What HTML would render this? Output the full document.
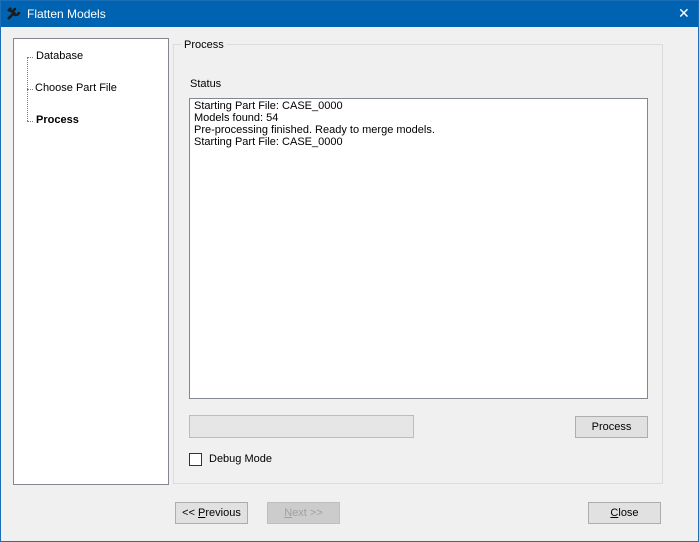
<!DOCTYPE html><html><head><style>
body{margin:0;width:699px;height:542px;overflow:hidden;font-family:"Liberation Sans",sans-serif;font-size:11px;}
.win{position:absolute;left:0;top:0;width:697px;height:540px;border:1px solid #1a6fb8;background:#f0f0f0;}
.title{position:absolute;left:0;top:0;width:697px;height:26px;background:#0063b1;color:#fff;}
.a{position:absolute;}
.btn{position:absolute;height:20px;border:1px solid #adadad;background:#e1e1e1;text-align:center;line-height:20px;color:#000;}
</style></head><body><div class="win">
<div class="title">
<svg class="a" style="left:5px;top:5px" width="16" height="16" viewBox="0 0 16 16"><path d="M2 13 L9 6 M3 3 L6 6 M5 2 L2 5 M10 3 A3 3 0 1 0 13 6" stroke="#1a1a1a" stroke-width="2.5" fill="none"/></svg>
<div class="a" style="left:26px;top:6px;font-size:12px">Flatten Models</div>
<div class="a" style="left:677px;top:4px;font-size:14px;font-weight:100">✕</div>
</div>
<div class="a" style="left:12px;top:37px;width:154px;height:445px;background:#fff;border:1px solid #828790"></div>
<div class="a" style="left:26px;top:56px;width:0;height:64px;border-left:1px dotted #777"></div>
<div class="a" style="left:26px;top:56px;width:6px;border-top:1px dotted #777"></div>
<div class="a" style="left:26px;top:88px;width:6px;border-top:1px dotted #777"></div>
<div class="a" style="left:26px;top:120px;width:6px;border-top:1px dotted #777"></div>
<div class="a" style="left:35px;top:49px">Database</div>
<div class="a" style="left:34px;top:81px">Choose Part File</div>
<div class="a" style="left:35px;top:113px;font-weight:bold">Process</div>
<div class="a" style="left:172px;top:43px;width:488px;height:438px;border:1px solid #dcdcdc"></div>
<div class="a" style="left:180px;top:38px;background:#f0f0f0;padding:0 3px">Process</div>
<div class="a" style="left:189px;top:77px">Status</div>
<div class="a" style="left:188px;top:97px;width:459px;height:301px;background:#fff;border:1px solid #828790;line-height:12px;padding:1px 0 0 4px;box-sizing:border-box">Starting Part File: CASE_0000<br>Models found: 54<br>Pre-processing finished. Ready to merge models.<br>Starting Part File: CASE_0000</div>
<div class="a" style="left:188px;top:414px;width:223px;height:21px;background:#e6e6e6;border:1px solid #bcbcbc"></div>
<div class="btn" style="left:574px;top:415px;width:71px">Process</div>
<div class="a" style="left:188px;top:452px;width:11px;height:11px;border:1px solid #333;background:#fff"></div>
<div class="a" style="left:208px;top:452px">Debug Mode</div>
<div class="btn" style="left:174px;top:501px;width:71px">&lt;&lt; <u>P</u>revious</div>
<div class="btn" style="left:266px;top:501px;width:71px;color:#a0a0a0;border-color:#bfbfbf;background:#cccccc"><u>N</u>ext &gt;&gt;</div>
<div class="btn" style="left:587px;top:501px;width:71px"><u>C</u>lose</div>
</div></body></html>
